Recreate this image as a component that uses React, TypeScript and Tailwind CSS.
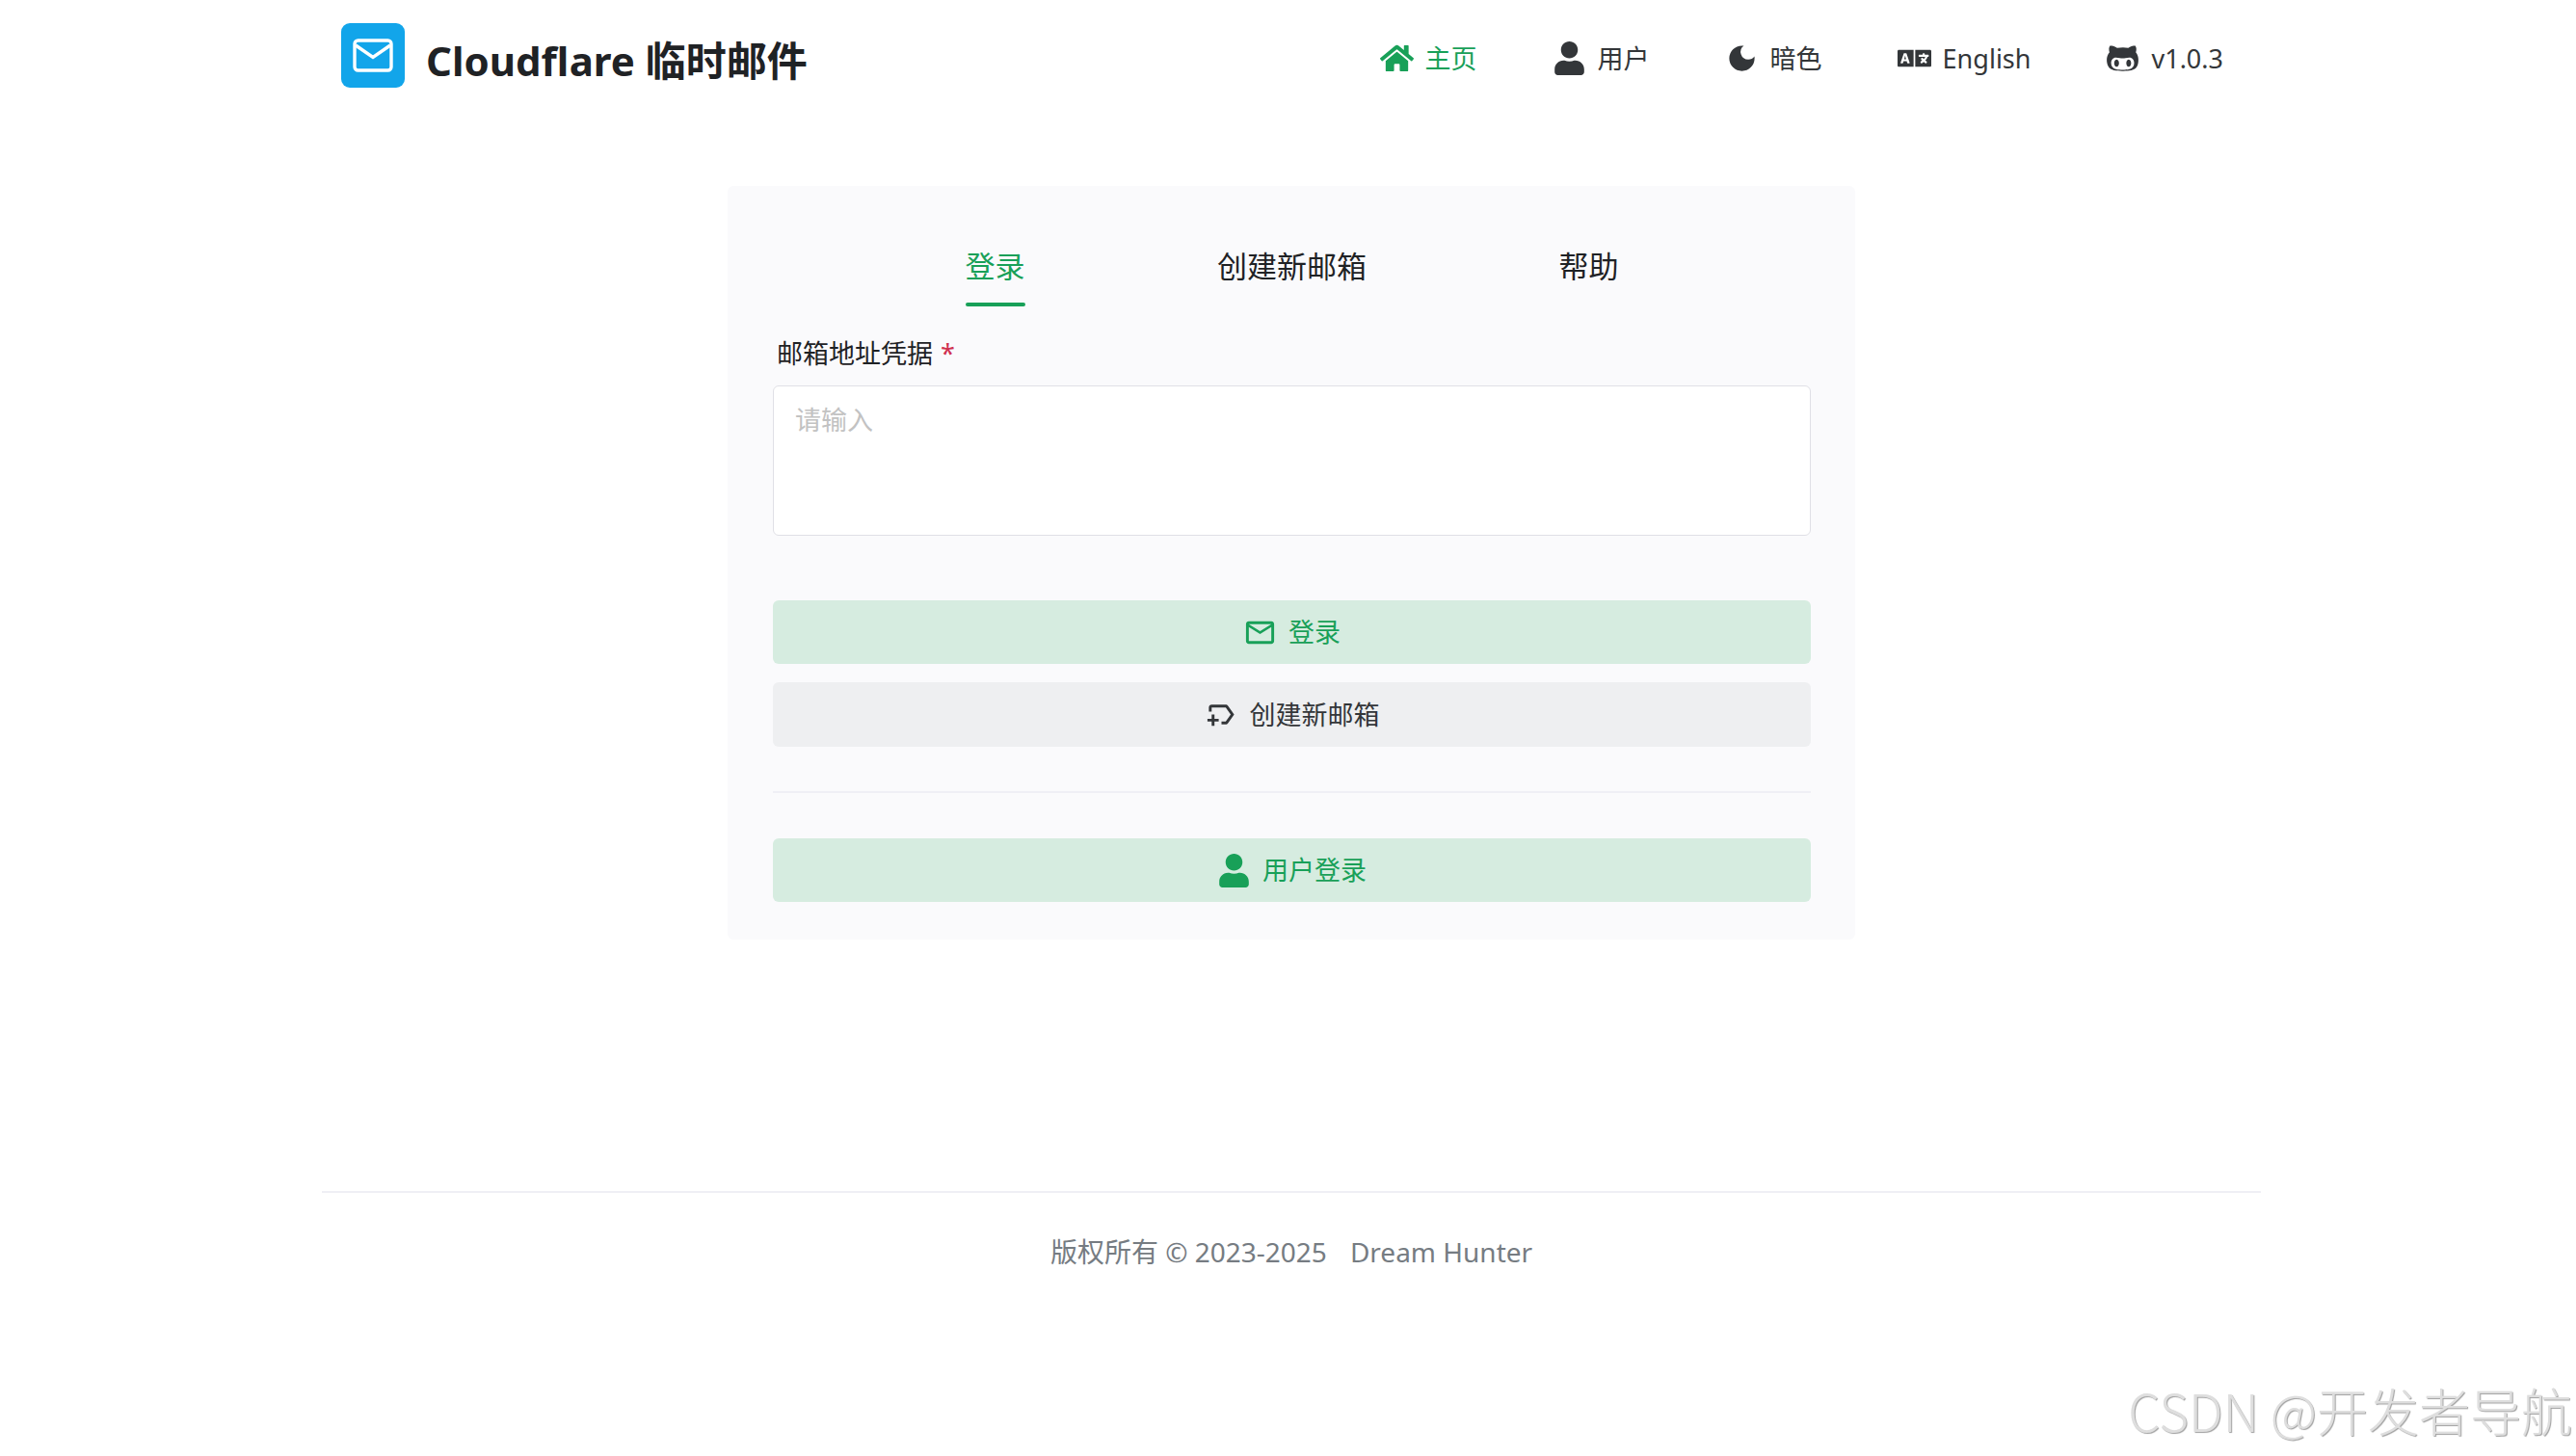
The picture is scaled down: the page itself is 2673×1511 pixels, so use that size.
// src/App.tsx
import React, { useState } from 'react';
import { FaGithubAlt, FaHome, FaLanguage, FaUser } from 'react-icons/fa';
import { MdDarkMode, MdMailOutline, MdOutlineNewLabel } from 'react-icons/md';

const menuItems = [
  { key: 'home', label: '主页', icon: FaHome },
  { key: 'user', label: '用户', icon: FaUser },
  { key: 'theme', label: '暗色', icon: MdDarkMode },
  { key: 'lang', label: 'English', icon: FaLanguage },
  { key: 'version', label: 'v1.0.3', icon: FaGithubAlt },
];

const tabs = [
  { key: 'signin', label: '登录' },
  { key: 'register', label: '创建新邮箱' },
  { key: 'help', label: '帮助' },
];

function Logo() {
  return (
    <svg viewBox="0 0 66 67" className="w-[66px] h-[67px] shrink-0" aria-hidden="true">
      <rect width="66" height="67" rx="9" fill="#12a5ea" />
      <rect x="14" y="18" width="38" height="31" rx="3.5" fill="none" stroke="#fff" strokeWidth="3.4" />
      <path d="M15 23 L33 35.5 L51 23" fill="none" stroke="#fff" strokeWidth="3.4" />
    </svg>
  );
}

function App() {
  const [activeTab, setActiveTab] = useState('signin');
  const [credential, setCredential] = useState('');

  return (
    <div className="relative min-h-screen bg-white pl-[7px] text-[27px] leading-[40px] text-[#1f2225] font-['Noto_Sans','Noto_Sans_CJK_SC',sans-serif]">
      <div className="mx-auto w-full max-w-[2012px]">
        {/* Header */}
        <header className="flex items-center justify-between pl-5 pt-6">
          <div className="flex items-center gap-[22px]">
            <Logo />
            <h1 className="pt-[11px] text-[42px] leading-[56px] font-bold">Cloudflare 临时邮件</h1>
          </div>
          <nav className="flex items-center pt-1.5">
            {menuItems.map(({ key, label, icon: Icon }) => (
              <button
                key={key}
                type="button"
                className={`flex items-center gap-3 px-[39px] ${key === 'home' ? 'text-[#18a058]' : 'text-[#333639]'}`}
              >
                <Icon className="size-[35px]" />
                <span>{label}</span>
              </button>
            ))}
          </nav>
        </header>

        {/* Login card */}
        <main className="mx-auto mt-[102px] w-full max-w-[1170px] rounded-md bg-[#fafafc] pl-[47px] pr-[46px] pt-[62px] pb-[39px]">
          <div className="flex justify-evenly" role="tablist">
            {tabs.map(tab => (
              <button
                key={tab.key}
                type="button"
                role="tab"
                aria-selected={activeTab === tab.key}
                onClick={() => setActiveTab(tab.key)}
                className={`flex flex-col gap-4 text-[31px] leading-[43px] ${activeTab === tab.key ? 'text-[#18a058]' : ''}`}
              >
                {tab.label}
                <span className={`h-1 w-full rounded-xs ${activeTab === tab.key ? 'bg-[#18a058]' : ''}`} />
              </button>
            ))}
          </div>

          <form onSubmit={e => e.preventDefault()}>
            <label htmlFor="credential" className="mt-[29px] flex gap-2 pl-1">
              邮箱地址凭据 <span className="text-[#d03050]">*</span>
            </label>
            <textarea
              id="credential"
              placeholder="请输入"
              value={credential}
              onChange={e => setCredential(e.target.value)}
              className="mt-[13px] block h-[156px] w-full resize-none rounded-md border border-[#e0e0e6] bg-white px-[22px] py-[15px] placeholder:text-[#c2c2c2]"
            />
            <button
              type="submit"
              className="mt-[67px] flex h-[66px] w-full items-center justify-center gap-3 rounded-md bg-[#d6ece0] text-[#18a058]"
            >
              <MdMailOutline className="size-[35px]" />
              登录
            </button>
            <button
              type="button"
              onClick={() => setActiveTab('register')}
              className="mt-[19px] flex h-[67px] w-full items-center justify-center gap-3 rounded-md bg-[#eeeff1] text-[#333639]"
            >
              <MdOutlineNewLabel className="size-[35px]" />
              创建新邮箱
            </button>
          </form>

          <hr className="mt-[46px] mb-[47px] border-t-2 border-[#efeff5]" />

          <button
            type="button"
            className="flex h-[66px] w-full items-center justify-center gap-3 rounded-md bg-[#d6ece0] text-[#18a058]"
          >
            <FaUser className="size-[35px]" />
            用户登录
          </button>
        </main>

        {/* Footer */}
        <footer className="mt-[261px] border-t-2 border-[#efeff5] pt-[41px] pb-10">
          <div className="flex justify-center gap-6 text-[28px] text-[#767c82]">
            <span>版权所有 © 2023-2025</span>
            <span>Dream Hunter</span>
          </div>
        </footer>
      </div>

      <div className="absolute right-1 bottom-1 text-[53px] leading-[88px] font-light text-[#dedede] font-['Noto_Sans_CJK_SC',sans-serif] [text-shadow:1px_1px_1px_#a0a0a0]">
        CSDN @开发者导航
      </div>
    </div>
  );
}

export default App;
